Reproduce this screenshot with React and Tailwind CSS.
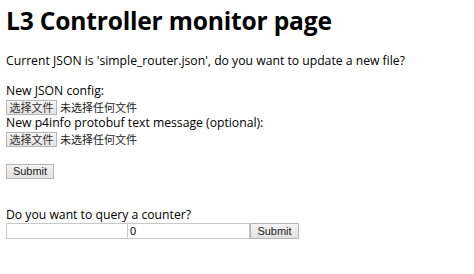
import React from "react";

const sans = "font-['Open_Sans','Noto_Sans_CJK_SC',sans-serif]";

function FileRow() {
  return (
    <div className="flex items-center h-[16px] gap-[3px]">
      <button className="h-[15px] w-[51px] border border-[#b5b5b5] bg-gradient-to-b from-[#f4f4f4] to-[#e1e1e1] text-[11px] leading-none text-[#333] font-['Noto_Sans_CJK_SC',sans-serif]">
        选择文件
      </button>
      <span className="text-[11px] leading-none text-[#222] font-['Noto_Sans_CJK_SC',sans-serif]">未选择任何文件</span>
    </div>
  );
}

export default function App() {
  return (
    <div className={`min-h-screen bg-white text-black px-[6px] ${sans}`}>
      <h1 className="pt-[5px] text-[24.6px] font-bold leading-[32px] tracking-[-0.2px]">L3 Controller monitor page</h1>

      <p className="mt-[16px] text-[12.2px] leading-[16px]">
        Current JSON is 'simple_router.json', do you want to update a new file?
      </p>

      <form className="mt-[14px] text-[12.2px]" onSubmit={(e) => e.preventDefault()}>
        <div className="leading-[16px]">New JSON config:</div>
        <FileRow />
        <div className="leading-[16px]">New p4info protobuf text message (optional):</div>
        <FileRow />
        <div className="h-[15px]" />
        <button
          type="submit"
          className="h-[15px] w-[48px] border border-[#b5b5b5] bg-gradient-to-b from-[#f4f4f4] to-[#e1e1e1] text-[11px] leading-none text-[#222] font-['Liberation_Sans',sans-serif]"
        >
          Submit
        </button>
      </form>

      <form className="mt-[27px] text-[12.2px]" onSubmit={(e) => e.preventDefault()}>
        <div className="leading-[16px]">Do you want to query a counter?</div>
        <div className="flex h-[16px]">
          <input className="w-[122px] h-[16px] border border-[#c8c8c8] bg-white text-[11px] px-[2px] outline-none" />
          <input
            defaultValue="0"
            className="w-[122px] h-[16px] border border-[#c8c8c8] border-l-0 bg-white text-[11px] px-[2px] outline-none font-['Liberation_Sans',sans-serif]"
          />
          <button
            type="submit"
            className="w-[49px] h-[16px] border border-[#b5b5b5] bg-gradient-to-b from-[#f4f4f4] to-[#e1e1e1] text-[11px] leading-none text-[#222] font-['Liberation_Sans',sans-serif]"
          >
            Submit
          </button>
        </div>
      </form>
    </div>
  );
}
